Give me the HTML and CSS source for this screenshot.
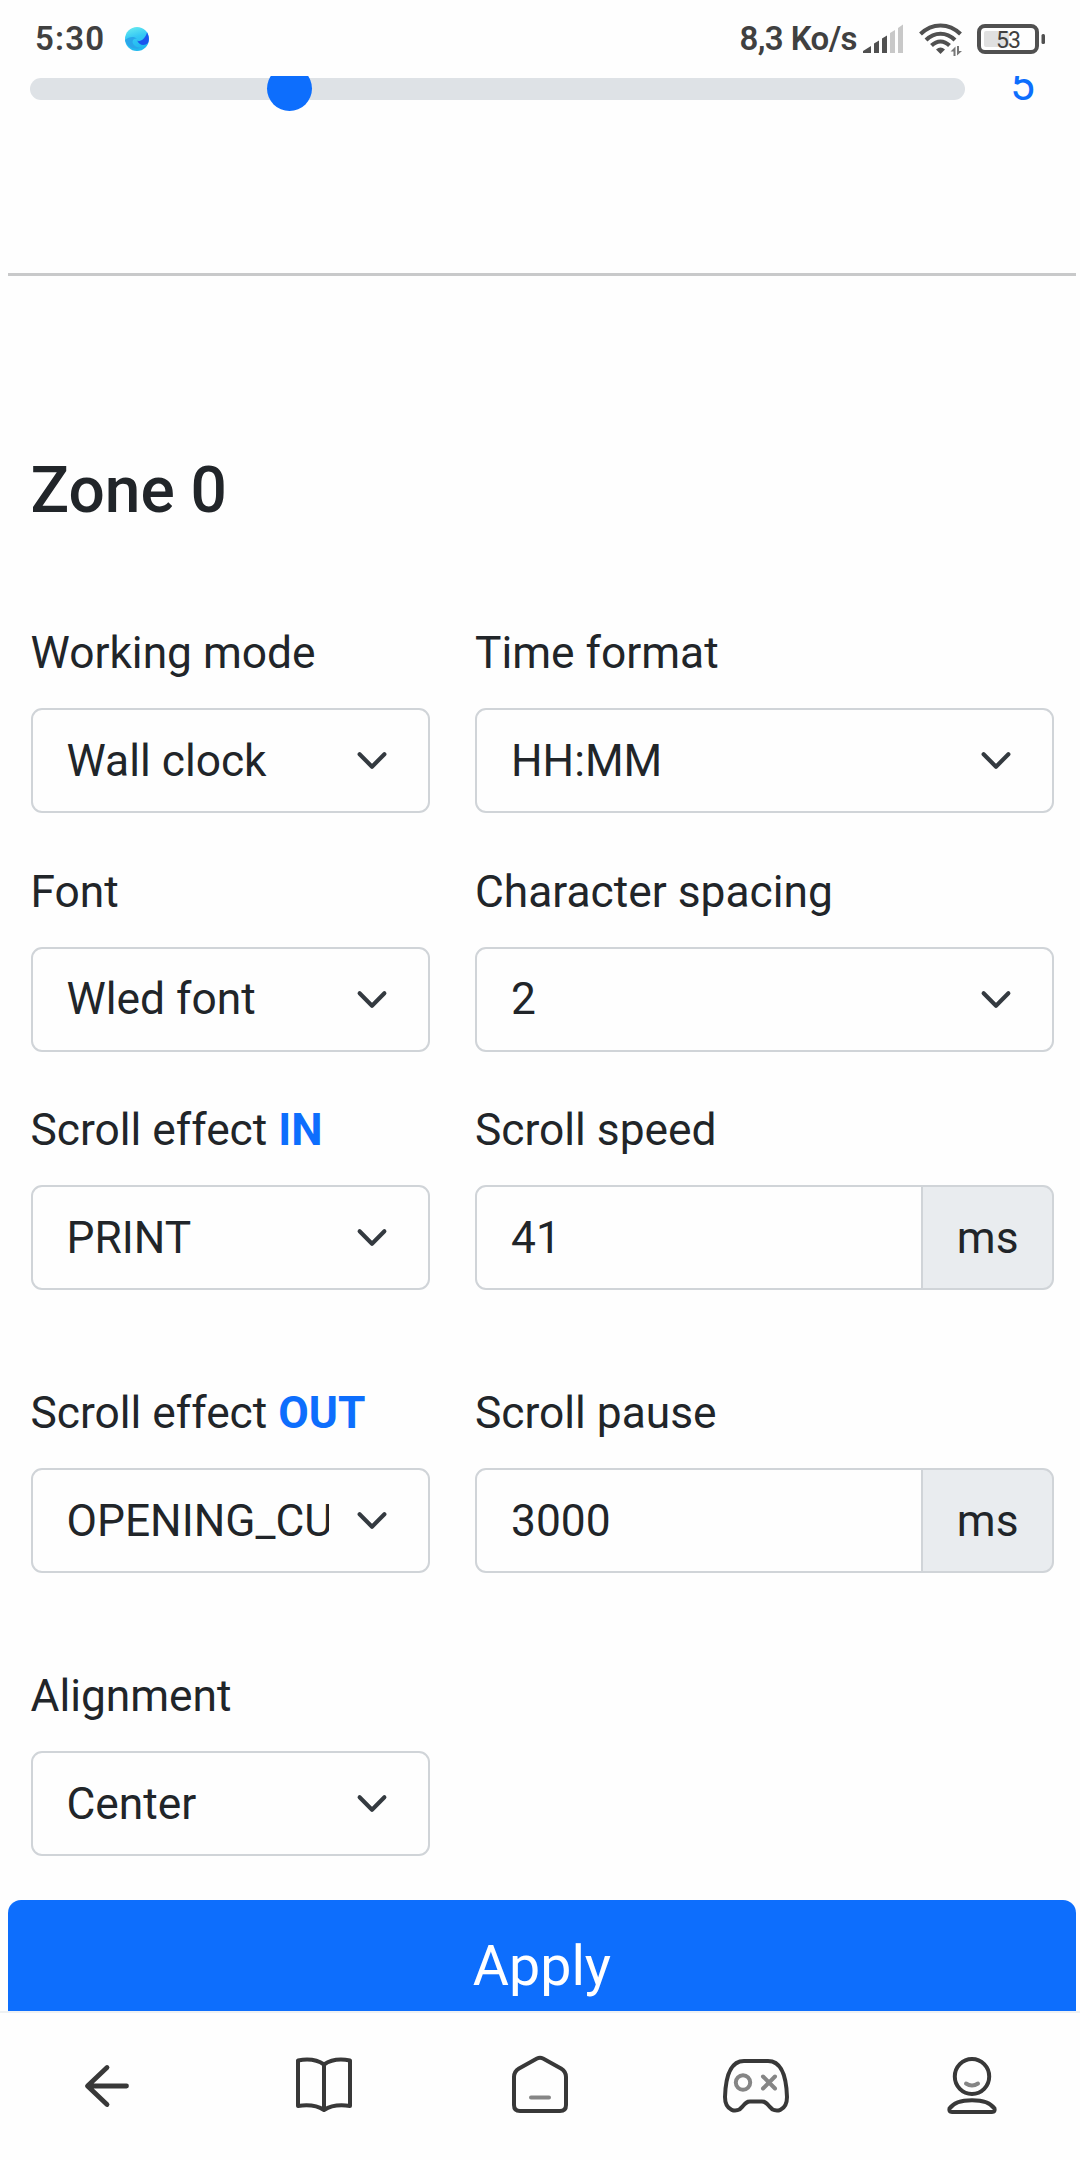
FILE: index.html
```html
<!DOCTYPE html>
<html lang="en">
<head>
    <meta charset="UTF-8">
    <meta name="viewport" content="width=device-width, initial-scale=1.0">
    <title>Zone settings</title>
    <link rel="stylesheet" href="styles.css">
</head>
<body>
    <header class="status-bar">
        <span class="clock">5:30</span>
        <svg class="browser-icon" viewBox="0 0 24 24">
            <defs>
                <linearGradient id="sky" x1="0" y1="0" x2="0.3" y2="1">
                    <stop offset="0" stop-color="#6ff0ee"/>
                    <stop offset="0.5" stop-color="#35c8f5"/>
                    <stop offset="1" stop-color="#20b8ee"/>
                </linearGradient>
            </defs>
            <circle cx="12" cy="12" r="12" fill="url(#sky)"/>
            <path d="M0 13C4 9.500 9 9 12 11.500C8 11 6 15 9 18C11 20.500 14 21 17 20C11 24 2 21 0 13z" fill="#2aa6ea"/>
            <path d="M12 13C13 16 20 13 22 5.500C24 9 24.500 13 23 16C20 19 14 19 12 13z" fill="#1b55ee"/>
        </svg>
        <div class="status-right">
            <span class="net-speed">8,3 Ko/s</span>
            <svg class="signal-icon" viewBox="0 0 41 30">
                <path d="M0 29V27L8 22V29zM11 19.500L16 16.500V29H11zM19 14.500L24 11.500V29H19z" fill="#505050"/>
                <path d="M27 9L32 6V29H27zM35 4L40 .5V29H35z" fill="#c8c8c8"/>
            </svg>
            <svg class="wifi-icon" viewBox="0 0 43 33">
                <g fill="none" stroke="#505050" stroke-width="4">
                    <path d="M1.500 11C13 -.5 30 -.5 41.500 11"/>
                    <path d="M7 17C15.500 8.500 27.500 8.500 36 17"/>
                    <path d="M12.500 22.500C18 17 25 17 30.500 22.500"/>
                </g>
                <path d="M17 26.500Q21.500 22.500 26 26.500L21.500 31z" fill="#505050"/>
                <path d="M31.500 28.500L36.500 23.500V33H34.500V28.500zM38 23H40V28H43L38 32.500z" fill="#777"/>
            </svg>
            <svg class="battery-icon" viewBox="0 0 69 30">
                <rect x="2" y="2" width="58" height="26" rx="6" fill="none" stroke="#505050" stroke-width="4"/>
                <rect x="7" y="7" width="25" height="16" rx="2" fill="#e0e0e0"/>
                <rect x="64.500" y="10" width="3.500" height="10" rx="1.500" fill="#505050"/>
                <text x="31" y="23.500" text-anchor="middle">53</text>
            </svg>
        </div>
    </header>

    <main class="page">
        <div class="slider-row">
            <div class="track"><span class="thumb"></span></div>
            <span class="slider-value">5</span>
        </div>
        <hr>
        <form class="zone">
            <h4>Zone 0</h4>
            <div class="row">
                <div class="field">
                    <label for="mode">Working mode</label>
                    <select id="mode"><option>Wall clock</option></select>
                </div>
                <div class="field">
                    <label for="format">Time format</label>
                    <select id="format"><option>HH:MM</option></select>
                </div>
            </div>
            <div class="row">
                <div class="field">
                    <label for="font">Font</label>
                    <select id="font"><option>Wled font</option></select>
                </div>
                <div class="field">
                    <label for="spacing">Character spacing</label>
                    <select id="spacing"><option>2</option></select>
                </div>
            </div>
            <div class="row spaced">
                <div class="field">
                    <label for="effect-in">Scroll effect <b>IN</b></label>
                    <select id="effect-in"><option>PRINT</option></select>
                </div>
                <div class="field">
                    <label for="speed">Scroll speed</label>
                    <div class="input-group">
                        <input id="speed" type="text" value="41">
                        <span class="unit">ms</span>
                    </div>
                </div>
            </div>
            <div class="row spaced">
                <div class="field">
                    <label for="effect-out">Scroll effect <b>OUT</b></label>
                    <select id="effect-out"><option>OPENING_CURSOR</option></select>
                </div>
                <div class="field">
                    <label for="pause">Scroll pause</label>
                    <div class="input-group">
                        <input id="pause" type="text" value="3000">
                        <span class="unit">ms</span>
                    </div>
                </div>
            </div>
            <div class="row last">
                <div class="field">
                    <label for="align">Alignment</label>
                    <select id="align"><option>Center</option></select>
                </div>
            </div>
        </form>
        <button class="apply" type="button">Apply</button>
    </main>

    <nav class="bottom-nav">
        <a>
            <svg class="arrow" viewBox="0 0 72 72">
                <path d="M54.500 36H16M35 17.500L15.500 36L35 54.500"/>
            </svg>
        </a>
        <a>
            <svg viewBox="0 0 72 72">
                <path d="M10 10.500Q26 7.500 36 14.500Q46 7.500 62 10.500V56Q46 53.500 36 60Q26 53.500 10 56zM36 14.500V60"/>
            </svg>
        </a>
        <a>
            <svg viewBox="0 0 72 72">
                <path d="M33 8.500Q36 7 39 8.500L57 18.500Q62 21.500 62 27V55Q62 61 56 61H16Q10 61 10 55V27Q10 21.500 15 18.500z"/>
                <path class="light" d="M27 47.500H45"/>
            </svg>
        </a>
        <a>
            <svg viewBox="0 0 72 72">
                <path d="M24 11H48C63 11 66.500 30 67 47C67 61 55 64 49.500 56.500C46.500 53 45.500 51.500 42 51.500H30C26.500 51.500 25.500 53 22.500 56.500C17 64 5 61 5 47C5.500 30 9 11 24 11z"/>
                <circle class="light" cx="23" cy="32.500" r="7.200"/>
                <path class="light" d="M43 26.500L55 38.500M55 26.500L43 38.500"/>
            </svg>
        </a>
        <a>
            <svg viewBox="0 0 72 72">
                <ellipse cx="36" cy="26.500" rx="17.200" ry="17.500"/>
                <path class="light" d="M30 33.500Q36 37.500 42 33.500"/>
                <path d="M16 62Q12.500 62 13.500 58.500C21 47.500 51 47.500 58.500 58.500Q59.500 62 56 62z"/>
            </svg>
        </a>
    </nav>
</body>
</html>
```

FILE: styles.css
```css
* {
    box-sizing: border-box;
}

body {
    display: flex;
    flex-direction: column;
    height: 2160px;
    margin: 0;
    background: #fefefe;
    color: #212529;
    font-family: Roboto, sans-serif;
    font-size: 44.3px;
    line-height: 66px;
    overflow: hidden;
}

.status-bar {
    display: flex;
    align-items: center;
    flex: none;
    height: 76px;
    padding: 2px 34px 0 35px;
    color: #404040;
    font-size: 33px;
    font-weight: 600;
}

.clock {
    letter-spacing: 1.2px;
}

.net-speed {
    letter-spacing: -0.6px;
}

.browser-icon {
    width: 24px;
    height: 24px;
    margin-left: 20px;
}

.status-right {
    display: flex;
    align-items: center;
    margin-left: auto;
}

.signal-icon {
    width: 41px;
    height: 30px;
    margin-left: 6px;
}

.wifi-icon {
    width: 43px;
    height: 33px;
    margin-left: 15px;
}

.battery-icon {
    width: 69px;
    height: 30px;
    margin-left: 15px;
}

.battery-icon text {
    fill: #404040;
    font-size: 23px;
    font-weight: 400;
    letter-spacing: -1px;
}

.page {
    flex: none;
    height: 1935px;
    overflow: hidden;
}

.slider-row {
    display: flex;
    height: 44px;
    margin-top: -9px;
    padding-left: 30px;
    align-items: center;
}

.track {
    width: 935px;
    height: 22px;
    padding-left: 237px;
    border-radius: 11px;
    background: #dee2e6;
}

.thumb {
    display: block;
    width: 45px;
    height: 45px;
    margin-top: -12px;
    border-radius: 50%;
    background: #0d6efd;
}

.slider-value {
    margin: -8px 0 0 45px;
    color: #0d6efd;
}

hr {
    height: 3px;
    margin: 162px 4px 0 8px;
    border: none;
    background: #c8c9ca;
}

.zone {
    padding: 175px 26px 0 30.5px;
}

h4 {
    margin: 0 0 90px;
    font-size: 64px;
    font-weight: 500;
    line-height: 79px;
}

.row {
    display: grid;
    grid-template-columns: 399.5px 579px;
    gap: 45px;
    margin-bottom: 45.5px;
}

.row.spaced {
    margin-bottom: 90px;
}

.row.last {
    margin-bottom: 44px;
}

label {
    display: block;
    margin-bottom: 22px;
}

label b {
    color: #0d6efd;
}

select,
input {
    width: 100%;
    height: 105px;
    padding: 0 34px;
    border: 2px solid #d0d4d8;
    border-radius: 11px;
    background-color: #fefefe;
    color: #212529;
    font: inherit;
}

select {
    appearance: none;
    padding-right: 99px;
    background-image: url("data:image/svg+xml,%3Csvg xmlns='http://www.w3.org/2000/svg' viewBox='0 0 16 16'%3E%3Cpath fill='none' stroke='%23343a40' stroke-linecap='round' stroke-linejoin='round' stroke-width='2' d='M2 5l6 6 6-6'/%3E%3C/svg%3E");
    background-repeat: no-repeat;
    background-position: right 34px center;
    background-size: 44px 33px;
}

.input-group {
    display: flex;
}

.input-group input {
    flex: 1;
    min-width: 0;
    border-radius: 11px 0 0 11px;
}

.unit {
    display: flex;
    align-items: center;
    padding: 0 33.5px;
    margin-left: -2px;
    border: 2px solid #d0d4d8;
    border-radius: 0 11px 11px 0;
    background: #e9ecef;
}

.apply {
    display: block;
    width: 1068px;
    height: 132px;
    margin-left: 8px;
    border: none;
    border-radius: 13px;
    background: #0d6efd;
    color: #fff;
    font-family: inherit;
    font-size: 55.5px;
}

.bottom-nav {
    display: grid;
    grid-template-columns: repeat(5, 1fr);
    flex: 1;
    padding-bottom: 2px;
    border-top: 2px solid #eef1f3;
}

.bottom-nav a {
    display: flex;
    align-items: center;
    justify-content: center;
}

.bottom-nav svg {
    width: 72px;
    height: 72px;
    fill: none;
    stroke: #383838;
    stroke-width: 4;
    stroke-linecap: round;
    stroke-linejoin: round;
}

.bottom-nav .arrow {
    stroke-width: 4.8;
}

.bottom-nav .light {
    stroke: #858585;
}
```
